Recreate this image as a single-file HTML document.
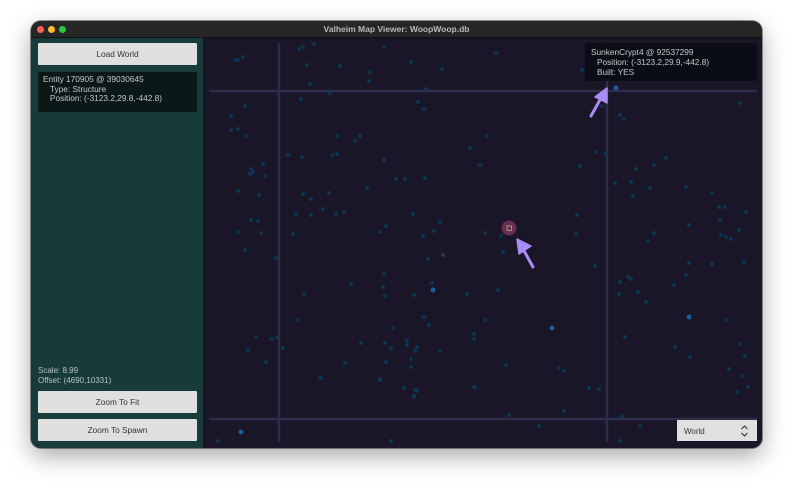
<!DOCTYPE html>
<html><head><meta charset="utf-8"><style>
body{margin:0;width:794px;height:490px;background:#fff;overflow:hidden;font-family:"Liberation Sans",sans-serif;}
.win{position:absolute;left:31px;top:21px;width:731px;height:427px;border-radius:10px;overflow:hidden;background:#1a1527;box-shadow:0 8px 24px rgba(0,0,0,.35),0 0 0 1px rgba(0,0,0,.4);}
.title{position:absolute;left:0;top:0;right:0;height:16px;background:#262626;border-bottom:1px solid #111;color:#b9b9b9;font-size:8.5px;font-weight:bold;text-align:center;line-height:16px;}
.tl{position:absolute;top:5px;width:7px;height:7px;border-radius:50%;}
.side{position:absolute;left:0;top:17px;width:172px;bottom:0;background:#173a3a;}
.btn{position:absolute;left:7px;width:159px;height:22px;background:#dfdfdf;color:#333;font-size:8.3px;text-align:center;line-height:22px;border-radius:1px;}
.info{position:absolute;left:7px;top:34px;width:154px;height:37px;background:#0a1818;color:#c8c8c8;font-size:8.3px;line-height:9.5px;padding:3px 0 0 5px;border-radius:1px;}
.txt{position:absolute;left:7px;color:#b8c4c4;font-size:8px;line-height:10px;}
</style></head><body>
<div class="win">
<div class="title">Valheim Map Viewer: WoopWoop.db</div>
<div class="tl" style="left:6px;background:#fe5f57"></div>
<div class="tl" style="left:17px;background:#febc2e"></div>
<div class="tl" style="left:28px;background:#28c840"></div>
<div class="side">
<div class="btn" style="top:5px">Load World</div>
<div class="info">Entity 170905 @ 39030645<br>&nbsp;&nbsp;&nbsp;Type: Structure<br>&nbsp;&nbsp;&nbsp;Position: (-3123.2,29.8,-442.8)</div>
<div class="txt" style="top:328px">Scale: 8.99<br>Offset: (4690,10331)</div>
<div class="btn" style="top:353px">Zoom To Fit</div>
<div class="btn" style="top:381px">Zoom To Spawn</div>
</div>
</div>
<svg width="794" height="490" style="position:absolute;left:0;top:0">
<g stroke="#2b2e4c" stroke-width="2.5">
<line x1="209" y1="91" x2="757" y2="91"/><line x1="209" y1="419" x2="757" y2="419"/>
<line x1="279" y1="43" x2="279" y2="442"/><line x1="607" y1="43" x2="607" y2="442"/>
</g>
<g fill="#0c3553" id="d"></g>
<g fill="#1a5c9c"><circle cx="433" cy="290" r="2.5"/><circle cx="552" cy="328" r="2.5"/><circle cx="689" cy="317" r="2.5"/><circle cx="616" cy="88" r="2.5"/><circle cx="241" cy="432" r="2.5"/></g>
<circle cx="443" cy="255" r="2" fill="#33334a"/>
<rect x="585" y="43" width="172" height="38" rx="2" fill="#0a0d14" opacity=".95"/>
<text x="591" y="55" fill="#c8c8c8" font-size="8.3" font-family="Liberation Sans">SunkenCrypt4 @ 92537299</text>
<text x="597" y="65" fill="#c8c8c8" font-size="8.3" font-family="Liberation Sans">Position: (-3123.2,29.9,-442.8)</text>
<text x="597" y="75" fill="#c8c8c8" font-size="8.3" font-family="Liberation Sans">Built: YES</text>
<circle cx="509" cy="228" r="7.5" fill="#6a2d55"/>
<rect x="507" y="226" width="4.5" height="4.5" fill="none" stroke="#9a9a6a" stroke-width="1"/>
<g fill="#a98bf5" stroke="#a98bf5" stroke-width="3" stroke-linecap="round" stroke-linejoin="round">
<line x1="533" y1="267" x2="523" y2="249"/><polygon points="517,239 531,246 519,254" stroke-width="1.5"/>
<line x1="591" y1="116" x2="601" y2="98"/><polygon points="607,88 607,103 595,97" stroke-width="1.5"/>
</g>
<rect x="677" y="420" width="80" height="21" fill="#e0e0e0"/>
<text x="684" y="434" fill="#333" font-size="8" font-family="Liberation Sans">World</text>
<path d="M741.5 429 L744.5 426 L747.5 429 M741.5 433 L744.5 436 L747.5 433" fill="none" stroke="#333" stroke-width="1.1"/>
</svg>
<script>
var p=[[245,106],[231,116],[231,130],[238,129],[246,136],[337,136],[360,136],[355,141],[418,102],[424,109],[487,136],[470,148],[288,155],[302,157],[332,155],[337,154],[384,160],[480,165],[263,164],[251,169],[253,172],[250,174],[265,176],[396,179],[405,179],[425,178],[367,188],[238,191],[259,195],[303,194],[311,199],[329,193],[323,209],[296,214],[311,215],[336,214],[344,212],[413,214],[251,220],[258,221],[386,226],[380,232],[440,222],[434,231],[423,236],[485,233],[238,232],[261,233],[293,234],[245,250],[276,258],[428,259],[384,274],[351,284],[383,287],[432,283],[385,296],[414,295],[467,294],[498,290],[304,294],[298,320],[424,317],[429,325],[485,320],[393,328],[474,334],[474,339],[256,337],[272,339],[277,337],[283,348],[248,350],[361,343],[385,343],[391,348],[407,341],[407,345],[417,347],[415,351],[440,351],[411,359],[411,367],[386,362],[345,363],[266,362],[321,378],[380,380],[404,388],[415,390],[417,391],[475,387],[414,396],
[496,53],[582,70],[740,103],[602,106],[620,115],[624,119],[596,152],[606,153],[666,158],[654,165],[580,166],[636,169],[631,182],[615,183],[650,188],[686,187],[712,193],[633,196],[719,207],[725,207],[746,212],[720,220],[689,225],[739,230],[721,235],[726,237],[731,239],[577,215],[576,234],[654,233],[648,241],[501,236],[503,252],[689,263],[712,264],[744,262],[595,266],
[299,49],[303,47],[314,44],[384,47],[235,60],[238,60],[243,57],[307,65],[340,66],[370,72],[369,81],[310,84],[330,93],[301,99],[411,62],[442,69],[426,89],
[345,363],[386,362],[320,378],[380,379],[404,388],[416,390],[414,397],[474,387],[506,365],[559,368],[564,371],[589,388],[599,389],[564,411],[509,415],[539,426],[640,426],[622,416],[729,369],[742,376],[748,387],[737,392],[218,441],[391,441],[620,441],
[686,275],[674,285],[628,277],[631,279],[620,282],[619,294],[638,292],[646,302],[726,320],[625,337],[675,347],[690,357],[740,344],[745,356]];
var g=document.getElementById('d'),s='';p.forEach(function(a){s+='<circle cx="'+a[0]+'" cy="'+a[1]+'" r="2"/>';});g.innerHTML=s;
</script>
</body></html>
